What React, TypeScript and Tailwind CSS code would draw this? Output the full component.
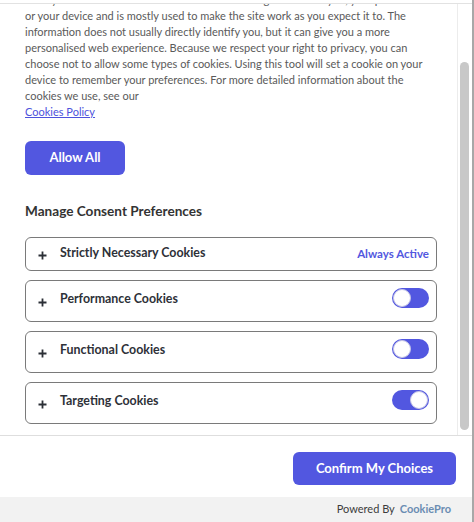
import React from 'react';

const Plus: React.FC = () => (
  <svg width="9" height="9" viewBox="0 0 9 9" className="shrink-0 text-[#2b2f36]">
    <path d="M4.5 0.5v8M0.5 4.5h8" stroke="currentColor" strokeWidth={1.8} />
  </svg>
);

const Toggle: React.FC<{ on?: boolean }> = ({ on }) => (
  <div className={`w-[37px] h-[20px] rounded-full bg-[#5257e0] flex items-center p-[1px] ${on ? 'justify-end' : 'justify-start'}`}>
    <div className="size-[18px] rounded-full bg-white border border-[#c3c3e6]" />
  </div>
);

const lines = [
  'mostly in the form of cookies. This information might be about you, your preferences',
  'or your device and is mostly used to make the site work as you expect it to. The',
  'information does not usually directly identify you, but it can give you a more',
  'personalised web experience. Because we respect your right to privacy, you can',
  'choose not to allow some types of cookies. Using this tool will set a cookie on your',
  'device to remember your preferences. For more detailed information about the',
  'cookies we use, see our',
];

const categories = [
  { name: 'Performance Cookies', on: false },
  { name: 'Functional Cookies', on: false },
  { name: 'Targeting Cookies', on: true },
];

export default function App() {
  return (
    <div className="h-[522px] w-[474px] bg-[#a8a8a8] overflow-hidden font-['Lato',sans-serif]">
      <div className="w-[472px] h-full bg-white flex flex-col rounded-br-[3px]">
        <div className="h-[4px] shrink-0 border-b border-[#e2e2e2]" />

        <div className="flex h-[431px] shrink-0">
          <div className="flex-1 overflow-hidden pl-[25px] pr-[20px]">
            <div className="-mt-[12px] text-[11px] leading-[16px] text-[#5a5a5a] whitespace-nowrap">
              {lines.map((l, i) => (
                <div key={i}>{l}</div>
              ))}
              <a className="text-[#4d52dc] underline">Cookies Policy</a>
            </div>

            <button className="mt-[21px] w-[100px] h-[34px] rounded-[6px] bg-[#5257e0] text-white text-[13px] font-bold">
              Allow All
            </button>

            <h3 className="mt-[26px] text-[13.6px] leading-[20px] font-bold text-[#333]">Manage Consent Preferences</h3>

            <div className="mt-[16px] flex flex-col gap-[9px]">
              <div className="h-[34px] border border-[#7a7a7a] rounded-[6px] flex items-center pl-[12px] pr-[7px]">
                <div className="mt-[3px]"><Plus /></div>
                <span className="ml-[13px] text-[12.4px] font-bold text-[#2e3138] -mt-[1px]">Strictly Necessary Cookies</span>
                <span className="ml-auto text-[11.5px] font-bold text-[#5257e0]">Always Active</span>
              </div>
              {categories.map((c) => (
                <div key={c.name} className="h-[42px] border border-[#7a7a7a] rounded-[6px] flex items-start pt-[7px] pl-[12px] pr-[7px]">
                  <div className="mt-[10px]"><Plus /></div>
                  <span className="ml-[13px] mt-[3px] text-[12.4px] leading-[16px] font-bold text-[#2e3138]">{c.name}</span>
                  <div className="ml-auto">
                    <Toggle on={c.on} />
                  </div>
                </div>
              ))}
            </div>
          </div>

          <div className="w-[15px] shrink-0 border-l border-[#ececec] pt-[58px] pl-[2px]">
            <div className="w-[9px] h-[368px] rounded-full bg-[#c8c8c8]" />
          </div>
        </div>

        <div className="h-[62px] shrink-0 border-t border-[#dedede] flex justify-end items-start pt-[16px] pr-[16px]">
          <button className="w-[163px] h-[33px] rounded-[6px] bg-[#5257e0] text-white text-[13px] font-bold">
            Confirm My Choices
          </button>
        </div>

        <div className="flex-1 bg-[#f2f2f2] flex items-center justify-end pr-[21px] text-[11px]">
          <span className="text-[#3c3c3c]">Powered By</span>
          <span className="ml-[5px] font-bold text-[#6b8db3]">CookiePro</span>
        </div>
      </div>
    </div>
  );
}
